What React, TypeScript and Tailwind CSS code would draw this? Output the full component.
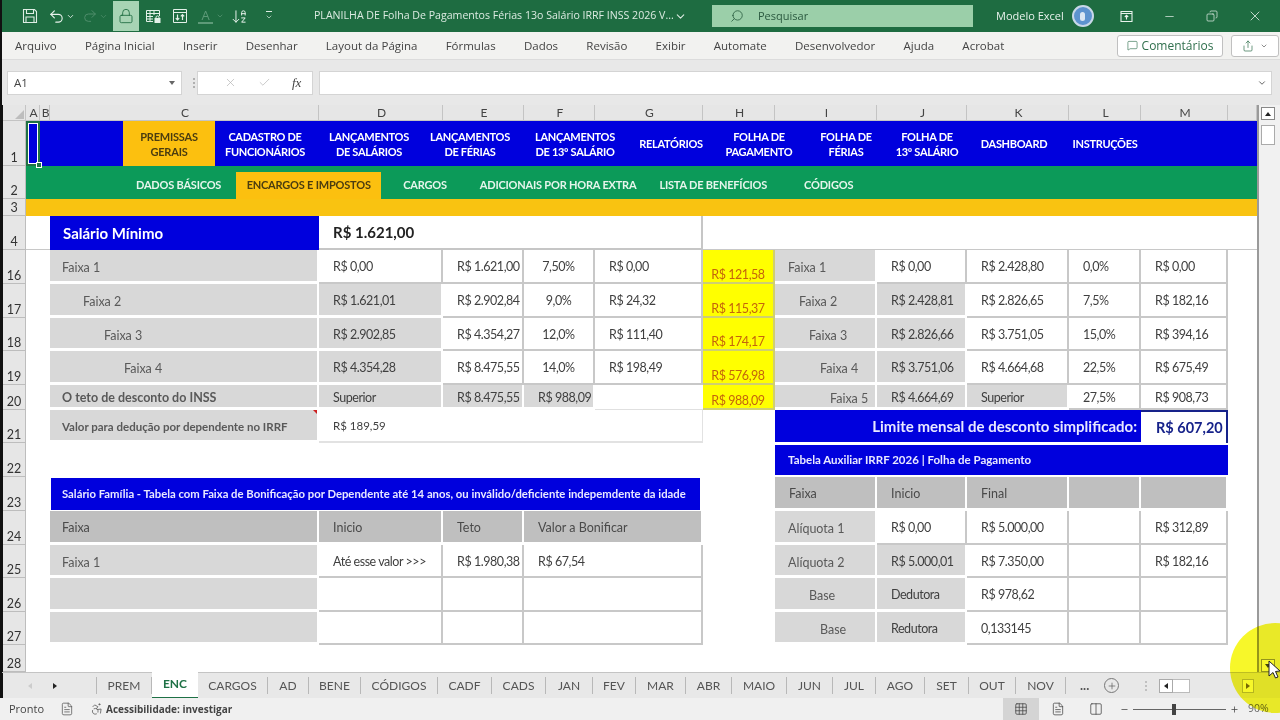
import React from "react";
import { Undo2, Redo2, Lock, ChevronDown, Search, X, Minus, Plus, MessageSquare, Share, Check, ArrowDownAZ, Copy, Grid3x3, FileText, Columns2, Accessibility } from "lucide-react";

type P = { c?: string; children?: React.ReactNode };
const D = ({ c = "", children }: P) => <div className={`flex items-center whitespace-nowrap overflow-hidden ${c}`}>{children}</div>;

const gray = "bg-[#d8d8d8] border-b-[3px] border-r-[2px] border-white text-[#595959] text-[12.5px] pt-[6px]";
const grayV = "bg-[#d8d8d8] border-b-[3px] border-r-[2px] border-white text-[#3f3f3f] text-[12.5px] tracking-[-0.45px] pl-[14px] pt-[4px]";
const white = "bg-white border-b-[2px] border-r-[2px] border-[#c8c8c8] text-[#3f3f3f] text-[12.5px] tracking-[-0.45px] pl-[14px] pt-[3px]";
const head = "bg-[#bfbfbf] border-b-[3px] border-r-[2px] border-white text-[#4a4a4a] text-[12.5px] pl-[14px] pt-[4px]";
const yellow = "bg-[#ffff00] border-b-[2px] border-r-[2px] border-[#cfcf70] text-[#c4640c] text-[12.5px] tracking-[-0.45px] leading-[14px] !items-end justify-center";

const ColH = ({ c = "", children }: P) => (
  <div className={`bg-[#e6e6e6] border-r border-[#c4c4c4] border-b flex items-center justify-center pl-[2px] text-[12px] text-[#444] ${c}`}>{children}</div>
);
const RowH = ({ c = "", children }: P) => (
  <div className={`bg-[#e6e6e6] border-r border-b border-[#bdbdbd] flex items-end justify-center text-[12.5px] text-[#333] leading-[15px] ${c}`}>{children}</div>
);

const Nav = ({ w, children }: { w: string; children: React.ReactNode }) => (
  <div className={`${w} flex items-center justify-center text-center text-white font-bold text-[11px] tracking-[-0.3px] leading-[15px] whitespace-nowrap`}>{children}</div>
);

const tabs: [string, string][] = [
  ["PREM", "w-[55px]"], ["ENC", "w-[46px]"], ["CARGOS", "w-[70px]"], ["AD", "w-[41px]"], ["BENE", "w-[52px]"], ["CÓDIGOS", "w-[77px]"],
  ["CADF", "w-[54px]"], ["CADS", "w-[54px]"], ["JAN", "w-[47px]"], ["FEV", "w-[43px]"], ["MAR", "w-[50px]"], ["ABR", "w-[46px]"],
  ["MAIO", "w-[55px]"], ["JUN", "w-[46px]"], ["JUL", "w-[43px]"], ["AGO", "w-[49px]"], ["SET", "w-[44px]"], ["OUT", "w-[47px]"], ["NOV", "w-[50px]"],
];

const menu = ["Arquivo", "Página Inicial", "Inserir", "Desenhar", "Layout da Página", "Fórmulas", "Dados", "Revisão", "Exibir", "Automate", "Desenvolvedor", "Ajuda", "Acrobat"];

export default function App() {
  return (
    <div className="relative w-[1280px] h-[720px] overflow-hidden bg-white font-['Lato',sans-serif] flex flex-col blur-[0.35px]">
      {/* Title bar */}
      <div className="h-[32px] shrink-0 bg-[#1e6c41] flex items-center text-white font-['Open_Sans',sans-serif]">
        <svg className="ml-[22px] text-[#dfeee5]" width="16" height="16" viewBox="0 0 16 16" fill="none" stroke="currentColor" strokeWidth="1.1">
          <path d="M1.5 1.5H12.5L14.5 3.5V14.5H1.5Z M4.5 1.5V5.5H11.5V1.5 M4 14.5V9H12V14.5" />
        </svg>
        <Undo2 className="ml-[10px] w-[17px] h-[17px] text-[#e8f2ec]" strokeWidth={1.6} />
        <ChevronDown className="ml-[1px] w-[9px] h-[9px]" />
        <Redo2 className="ml-[7px] w-[16px] h-[16px] text-[#4f8d6b]" strokeWidth={1.5} />
        <ChevronDown className="ml-[1px] w-[9px] h-[9px] text-[#4f8d6b]" />
        <div className="ml-[5px] w-[26px] h-[30px] mt-[-1px] bg-[#a7d4b4] flex items-center justify-center">
          <Lock className="w-[16px] h-[16px] text-[#1e6c41]" strokeWidth={1.3} />
        </div>
        <svg className="ml-[6px] text-[#e3f0e8]" width="16" height="16" viewBox="0 0 16 16" fill="none" stroke="currentColor" strokeWidth="1">
          <path d="M1.5 2.5H14.5V8 M1.5 2.5V13.5H8 M1.5 5.5H14.5 M1.5 8.5H8 M1.5 11H8 M5 2.5V13.5 M9 2.5V7" />
          <rect x="10" y="10.5" width="5" height="4" fill="currentColor" />
          <path d="M11 10.5V9C11 7.5 14 7.5 14 9V10.5" />
        </svg>
        <svg className="ml-[11px] text-[#e3f0e8]" width="16" height="16" viewBox="0 0 16 16" fill="none" stroke="currentColor" strokeWidth="1">
          <path d="M1.5 1.5H14.5V14.5H1.5Z M1.5 4.5H14.5" />
          <path d="M5.5 6.5V12 M3.8 10.2L5.5 12L7.2 10.2 M10.5 12V6.5 M8.8 8.3L10.5 6.5L12.2 8.3" strokeWidth="1.2" />
        </svg>
        <span className="ml-[10px] w-[15px] text-center text-[13px] leading-[14px] text-[#5d9a78] border-b-2 border-[#5d9a78]">A</span>
        <ChevronDown className="ml-[3px] w-[8px] h-[8px] text-[#5d9a78]" />
        <ArrowDownAZ className="ml-[7px] w-[17px] h-[17px] text-[#e8f2ec]" strokeWidth={1.4} />
        <div className="ml-[17px] flex flex-col items-center gap-[1px]">
          <div className="w-[6px] h-[1px] bg-[#dfeee5]" />
          <ChevronDown className="w-[8px] h-[8px] text-[#dfeee5]" />
        </div>
        <span className="ml-[41px] w-[360px] text-[10.6px] text-[#dcebe2] whitespace-nowrap">PLANILHA DE Folha De Pagamentos Férias 13o Salário IRRF INSS 2026 V...</span>
        <ChevronDown className="w-[13px] h-[13px] text-[#dcebe2]" />
        <div className="ml-[25px] w-[261px] h-[22px] bg-[#9bcfa9] flex items-center text-[#2c5a40] text-[11px]">
          <Search className="ml-[18px] w-[14px] h-[14px] -scale-x-100 text-[#285c3f]" strokeWidth={1.4} />
          <span className="ml-[14px]">Pesquisar</span>
        </div>
        <span className="ml-[23px] text-[11px] text-[#e8f2ec]">Modelo Excel</span>
        <div className="ml-[8px] w-[22px] h-[22px] rounded-full bg-[#5d93cf] border-2 border-[#c8d8e8] flex items-center justify-center">
          <div className="w-[5px] h-[9px] rounded-sm bg-[#dbe7f3]" />
        </div>
        <svg className="ml-[26px] text-[#e8f2ec]" width="13" height="13" viewBox="0 0 13 13" fill="none" stroke="currentColor" strokeWidth="1.1">
          <path d="M1 1.5H12V11.5H1Z M1 3.5H12 M6.5 9.5V5.5 M4.8 7L6.5 5.3L8.2 7" />
        </svg>
        <Minus className="ml-[30px] w-[13px] h-[13px] text-[#e8f2ec]" strokeWidth={1.3} />
        <Copy className="ml-[30px] w-[12px] h-[12px] -scale-x-100 text-[#e8f2ec]" strokeWidth={1.4} />
        <X className="ml-[29px] w-[16px] h-[16px] text-[#e8f2ec]" strokeWidth={1.2} />
      </div>

      {/* Menu */}
      <div className="h-[28px] shrink-0 bg-[#f2f2f0] flex items-center font-['Open_Sans',sans-serif] text-[11.5px] text-[#444] border-b border-[#dcdcdc]">
        <div className="flex-1 flex gap-[28.25px] pl-[15px]">
          {menu.map((m) => <span key={m}>{m}</span>)}
        </div>
        <div className="w-[106px] h-[22px] mr-[8px] bg-white border border-[#c0c0c0] rounded-[3px] flex items-center justify-center gap-[4px] text-[#2f6f4c] text-[12px]">
          <MessageSquare className="w-[11px] h-[11px]" strokeWidth={1.4} />
          Comentários
        </div>
        <div className="w-[48px] h-[22px] mr-[1px] bg-white border border-[#c0c0c0] rounded-[3px] flex items-center justify-center gap-[6px] text-[#2f6f4c]">
          <Share className="w-[12px] h-[12px]" strokeWidth={1.4} />
          <ChevronDown className="w-[8px] h-[8px] text-[#555]" />
        </div>
      </div>

      {/* Formula bar */}
      <div className="h-[45px] shrink-0 bg-[#e8e8e8] flex items-center text-[#444] font-['Open_Sans',sans-serif]">
        <div className="ml-[7px] w-[175px] h-[24px] bg-white border border-[#d4d4d4] flex items-center justify-between px-[6px] text-[11.5px]">
          A1
          <div className="w-0 h-0 border-l-[3.5px] border-r-[3.5px] border-t-[4px] border-l-transparent border-r-transparent border-t-[#666]" />
        </div>
        <div className="ml-[11px] w-[2px] h-[10px] border-l-2 border-dotted border-[#b0b0b0]" />
        <div className="ml-[2px] w-[116px] h-[24px] bg-white border border-[#d4d4d4] flex items-center gap-[21px] pl-[26px] text-[#b4b4b4]">
          <X className="w-[13px] h-[13px]" strokeWidth={1.3} />
          <Check className="w-[13px] h-[13px]" strokeWidth={1.3} />
          <span className="font-['Liberation_Serif',serif] italic text-[13px] text-[#444]">fx</span>
        </div>
        <div className="ml-[6px] w-[953px] h-[24px] bg-white border border-[#d4d4d4] flex items-center justify-end pr-[4px]">
          <ChevronDown className="w-[10px] h-[10px] text-[#666]" strokeWidth={2.4} />
        </div>
      </div>

      {/* Sheet */}
      <div className="flex-1 min-h-0 flex bg-[#e6e6e6]">
        <div className="w-[3px] bg-[#111]" />
        <div className="w-[1254px] h-[567px] grid grid-cols-[23px_14px_10px_269px_124px_81px_71px_108px_72px_102px_90px_102px_72px_87px_29px] grid-rows-[16px_45px_33px_17px_34px_34px_34px_33px_34px_25px_33px_34px_34px_34px_33px_34px_33px_27px] bg-white">
          {/* column headers */}
          <div className="bg-[#e6e6e6] border-r border-b border-[#c4c4c4] flex items-end justify-end pr-[1px] pb-[1px]">
            <div className="w-0 h-0 border-l-[9px] border-b-[9px] border-l-transparent border-b-[#bdbdbd]" />
          </div>
          <ColH c="bg-[#d0d0d0]">A</ColH><ColH>B</ColH>
          {["C", "D", "E", "F", "G", "H", "I", "J", "K", "L", "M"].map((x) => <ColH key={x}>{x}</ColH>)}
          <ColH />

          {/* 1 */}
          <RowH c="bg-[#cfcfcf]">1</RowH>
          <div className="relative bg-[#0000dd] border-2 border-[#1f7145] outline outline-1 outline-white -outline-offset-3">
            <div className="absolute right-[-4px] bottom-[-4px] w-[6px] h-[6px] bg-[#1f7145] border border-white" />
          </div>
          <div className="col-span-13 bg-[#0000dd] flex pl-[83px]">
            <div className="w-[92px] bg-[#fcc00f] flex items-center justify-center text-center text-[#4a3c10] font-bold text-[11px] tracking-[-0.2px] leading-[15px]">PREMISSAS<br />GERAIS</div>
            <Nav w="w-[100px]">CADASTRO DE<br />FUNCIONÁRIOS</Nav>
            <Nav w="w-[108px]">LANÇAMENTOS<br />DE SALÁRIOS</Nav>
            <Nav w="w-[94px]">LANÇAMENTOS<br />DE  FÉRIAS</Nav>
            <Nav w="w-[116px]">LANÇAMENTOS<br />DE 13º  SALÁRIO</Nav>
            <Nav w="w-[76px]">RELATÓRIOS</Nav>
            <Nav w="w-[100px]">FOLHA DE<br />PAGAMENTO</Nav>
            <Nav w="w-[74px]">FOLHA DE<br />FÉRIAS</Nav>
            <Nav w="w-[88px]">FOLHA DE<br />13º SALÁRIO</Nav>
            <Nav w="w-[86px]">DASHBOARD</Nav>
            <Nav w="w-[96px]">INSTRUÇÕES</Nav>
          </div>

          {/* 2 */}
          <RowH>2</RowH>
          <div className="col-span-14 bg-[#0c9a59] flex items-end text-[11px] tracking-[-0.2px] font-bold text-[#e6f5ec] whitespace-nowrap">
            <div className="h-[27px] flex items-center ml-[110px]">DADOS BÁSICOS</div>
            <div className="h-[27px] w-[145px] ml-[15px] bg-[#fcc00f] flex items-center justify-center text-[#4a3c10]">ENCARGOS E IMPOSTOS</div>
            <div className="h-[27px] flex items-center ml-[22px]">CARGOS</div>
            <div className="h-[27px] flex items-center ml-[33px]">ADICIONAIS POR HORA EXTRA</div>
            <div className="h-[27px] flex items-center ml-[23px]">LISTA DE BENEFÍCIOS</div>
            <div className="h-[27px] flex items-center ml-[37px]">CÓDIGOS</div>
          </div>

          {/* 3 */}
          <RowH>3</RowH>
          <div className="col-span-14 bg-[#f9c311]" />

          {/* 4 */}
          <RowH>4</RowH>
          <div className="col-span-2 bg-white border-b border-[#c8c8c8]" />
          <D c="bg-[#0000dd] text-white font-bold text-[15px] pl-[13px]">Salário Mínimo</D>
          <D c="col-span-4 bg-white border-b-2 border-r-2 border-[#c6c6c6] text-[#222] font-bold text-[15px] pl-[14px]">R$ 1.621,00</D>
          <div className="col-span-7 bg-white border-b border-[#c8c8c8]" />

          {/* 16 */}
          <RowH>16</RowH><div className="col-span-2" />
          <D c={`${gray} pl-[12px]`}>Faixa 1</D>
          <D c={white}>R$ 0,00</D><D c={white}>R$ 1.621,00</D><D c={`${white} !pl-0 justify-center`}>7,50%</D><D c={white}>R$ 0,00</D>
          <D c={yellow}>R$ 121,58</D>
          <D c={`${gray} pl-[13px]`}>Faixa 1</D>
          <D c={white}>R$ 0,00</D><D c={white}>R$ 2.428,80</D><D c={white}>0,0%</D><D c={white}>R$ 0,00</D><div />

          {/* 17 */}
          <RowH>17</RowH><div className="col-span-2" />
          <D c={`${gray} pl-[33px]`}>Faixa 2</D>
          <D c={grayV}>R$ 1.621,01</D><D c={white}>R$ 2.902,84</D><D c={`${white} !pl-0 justify-center`}>9,0%</D><D c={white}>R$ 24,32</D>
          <D c={yellow}>R$ 115,37</D>
          <D c={`${gray} pl-[24px]`}>Faixa 2</D>
          <D c={grayV}>R$ 2.428,81</D><D c={white}>R$ 2.826,65</D><D c={white}>7,5%</D><D c={white}>R$ 182,16</D><div />

          {/* 18 */}
          <RowH>18</RowH><div className="col-span-2" />
          <D c={`${gray} pl-[54px]`}>Faixa 3</D>
          <D c={grayV}>R$ 2.902,85</D><D c={white}>R$ 4.354,27</D><D c={`${white} !pl-0 justify-center`}>12,0%</D><D c={white}>R$ 111,40</D>
          <D c={yellow}>R$ 174,17</D>
          <D c={`${gray} pl-[34px]`}>Faixa 3</D>
          <D c={grayV}>R$ 2.826,66</D><D c={white}>R$ 3.751,05</D><D c={white}>15,0%</D><D c={white}>R$ 394,16</D><div />

          {/* 19 */}
          <RowH>19</RowH><div className="col-span-2" />
          <D c={`${gray} pl-[74px]`}>Faixa 4</D>
          <D c={grayV}>R$ 4.354,28</D><D c={white}>R$ 8.475,55</D><D c={`${white} !pl-0 justify-center`}>14,0%</D><D c={white}>R$ 198,49</D>
          <D c={yellow}>R$ 576,98</D>
          <D c={`${gray} pl-[45px]`}>Faixa 4</D>
          <D c={grayV}>R$ 3.751,06</D><D c={white}>R$ 4.664,68</D><D c={white}>22,5%</D><D c={white}>R$ 675,49</D><div />

          {/* 20 */}
          <RowH>20</RowH><div className="col-span-2" />
          <D c={`${gray} !pt-[4px] pl-[12px] font-bold`}>O teto de desconto do INSS</D>
          <D c={grayV}>Superior</D><D c={grayV}>R$ 8.475,55</D><D c={grayV}>R$ 988,09</D><D c="bg-white border-b border-[#e0e0e0]" />
          <D c={yellow}>R$ 988,09</D>
          <D c={`${gray} pl-[55px]`}>Faixa 5</D>
          <D c={grayV}>R$ 4.664,69</D><D c={grayV}>Superior</D><D c={white}>27,5%</D><D c={white}>R$ 908,73</D><div />

          {/* 21 */}
          <RowH>21</RowH><div className="col-span-2" />
          <div className={`relative flex items-center ${gray} !pt-[3px] !text-[11.5px] pl-[12px] font-bold`}>
            Valor para dedução por dependente no IRRF
            <div className="absolute top-0 right-0 w-0 h-0 border-l-[4px] border-b-[4px] border-l-transparent border-b-transparent border-t-0 border-r-[4px] border-r-[#cc2020]" />
          </div>
          <D c="col-span-4 bg-white border-b-2 border-r border-[#e2e2e2] text-[#3f3f3f] text-[11.5px] pl-[14px]">R$ 189,59</D>
          <div />
          <D c="col-span-4 bg-[#0000dd] text-[#e8e8ff] font-bold text-[15px] justify-end pr-[4px] mb-[1px]">Limite mensal de desconto simplificado:</D>
          <D c="bg-white border-t-2 border-r-2 border-[#16228a] text-[#16228a] font-bold text-[14.5px] pl-[15px]">R$ 607,20</D>
          <div />

          {/* 22 */}
          <RowH>22</RowH><div className="col-span-7" />
          <div />
          <D c="col-span-5 bg-[#0000dd] text-[#e8e8ff] font-bold text-[11.5px] pl-[13px] my-[2px]">Tabela Auxiliar IRRF 2026 | Folha de Pagamento</D>
          <div />

          {/* 23 */}
          <RowH>23</RowH><div className="col-span-2" />
          <D c="col-span-5 ml-[1px] mr-[3px] my-[1px] bg-[#0000dd] text-[#e8e8ff] font-bold text-[11.3px] pl-[11px]">Salário Família - Tabela com Faixa de Bonificação por Dependente até 14 anos, ou inválido/deficiente indepemdente da idade</D>
          <div />
          <D c={head}>Faixa</D><D c={head}>Inicio</D><D c={head}>Final</D><D c={head} /><D c={head} /><div />

          {/* 24 */}
          <RowH>24</RowH><div className="col-span-2" />
          <D c={`${head} !pl-[12px]`}>Faixa</D><D c={head}>Inicio</D><D c={head}>Teto</D><D c={`${head} col-span-2`}>Valor a Bonificar</D>
          <div />
          <D c={`${gray} pl-[13px]`}>Alíquota 1</D><D c={white}>R$ 0,00</D><D c={white}>R$ 5.000,00</D><D c={white} /><D c={white}>R$ 312,89</D><div />

          {/* 25 */}
          <RowH>25</RowH><div className="col-span-2" />
          <D c={`${gray} pl-[12px]`}>Faixa 1</D><D c={white}>Até esse valor &gt;&gt;&gt;</D><D c={white}>R$ 1.980,38</D><D c={`${white} col-span-2`}>R$ 67,54</D>
          <div />
          <D c={`${gray} pl-[13px]`}>Alíquota 2</D><D c={grayV}>R$ 5.000,01</D><D c={white}>R$ 7.350,00</D><D c={white} /><D c={white}>R$ 182,16</D><div />

          {/* 26 */}
          <RowH>26</RowH><div className="col-span-2" />
          <D c={gray} /><D c={white} /><D c={white} /><D c={`${white} col-span-2`} />
          <div />
          <D c={`${gray} pl-[34px]`}>Base</D><D c={grayV}>Dedutora</D><D c={white}>R$ 978,62</D><D c={white} /><D c={white} /><div />

          {/* 27 */}
          <RowH>27</RowH><div className="col-span-2" />
          <D c={gray} /><D c={white} /><D c={white} /><D c={`${white} col-span-2`} />
          <div />
          <D c={`${gray} pl-[45px]`}>Base</D><D c={grayV}>Redutora</D><D c={white}>0,133145</D><D c={white} /><D c={white} /><div />

          {/* 28 */}
          <RowH>28</RowH><div className="col-span-14" />
        </div>

        {/* vertical scrollbar */}
        <div className="flex-1 bg-[#f1f1f1] border-l-2 border-[#9a9a9a] flex flex-col items-start pl-[2px] justify-between pt-[2px]">
          <div className="flex flex-col items-center gap-[5px]">
            <div className="w-[14px] h-[13px] bg-white border border-[#888] flex items-center justify-center">
              <div className="w-0 h-0 border-l-[3px] border-r-[3px] border-b-[4px] border-l-transparent border-r-transparent border-b-[#222]" />
            </div>
            <div className="w-[14px] h-[20px] bg-white border border-[#aaa]" />
          </div>
          <div className="w-[14px] h-[13px] bg-white border border-[#999] flex items-center justify-center">
            <div className="w-0 h-0 border-l-[3px] border-r-[3px] border-t-[4px] border-l-transparent border-r-transparent border-t-[#444]" />
          </div>
        </div>
      </div>

      {/* Sheet tabs */}
      <div className="h-[26px] shrink-0 bg-[#e8e8e8] border-t border-[#c4c4c4] flex items-center text-[12px] text-[#555]">
        <div className="w-[3px] h-full bg-[#111]" />
        <div className="w-[94px] h-[17px] flex items-center border-r border-[#b8b8b8]">
          <div className="ml-[25px] w-0 h-0 border-t-[3px] border-b-[3px] border-r-[4px] border-t-transparent border-b-transparent border-r-[#ccc]" />
          <div className="ml-[21px] w-0 h-0 border-t-[3.5px] border-b-[3.5px] border-l-[4px] border-t-transparent border-b-transparent border-l-[#222]" />
        </div>
        {tabs.map(([t, w]) =>
          t === "ENC" ? (
            <div key={t} className={`${w} h-[27px] mt-[-1px] bg-white border-b-2 border-[#1e7145] text-[#1e7145] font-bold flex items-center justify-center`}>{t}</div>
          ) : (
            <div key={t} className={`${w} h-[17px] border-r border-[#b8b8b8] flex items-center justify-center`}>{t}</div>
          )
        )}
        <span className="ml-[14px] text-[13px] font-bold">...</span>
        <div className="ml-[15px] w-[15px] h-[15px] rounded-full border border-[#777] flex items-center justify-center">
          <Plus className="w-[10px] h-[10px]" strokeWidth={1.6} />
        </div>
        <div className="ml-[26px] w-[2px] h-[10px] border-l-2 border-dotted border-[#c0c0c0]" />
        <div className="ml-[12px] w-[14px] h-[14px] bg-white border border-[#aaa] flex items-center justify-center">
          <div className="w-0 h-0 border-t-[3px] border-b-[3px] border-r-[4px] border-t-transparent border-b-transparent border-r-[#222]" />
        </div>
        <div className="w-[17px] h-[14px] bg-white border-y border-r border-[#bbb]" />
        <div className="ml-[52px] w-[12px] h-[14px] bg-white border border-[#bbb] flex items-center justify-center">
          <div className="w-0 h-0 border-t-[3px] border-b-[3px] border-l-[4px] border-t-transparent border-b-transparent border-l-[#7a6a10]" />
        </div>
      </div>

      {/* Status bar */}
      <div className="h-[22px] shrink-0 bg-[#f0f0f0] flex items-center text-[11px] text-[#444] font-['Open_Sans',sans-serif]">
        <span className="ml-[9px] w-[36px]">Pronto</span>
        <FileText className="ml-[15px] w-[14px] h-[14px] text-[#555]" strokeWidth={1.3} />
        <Accessibility className="ml-[16px] w-[14px] h-[14px] text-[#555]" strokeWidth={1.3} />
        <span className="ml-[2px] w-[124px] font-bold text-[10px] whitespace-nowrap">Acessibilidade: investigar</span>
        <div className="ml-[773px] w-[36px] h-[22px] bg-[#d4d4d4] flex items-center justify-center">
          <Grid3x3 className="w-[14px] h-[14px]" strokeWidth={1.3} />
        </div>
        <FileText className="ml-[12px] w-[14px] h-[14px]" strokeWidth={1.3} />
        <Columns2 className="ml-[24px] w-[14px] h-[14px]" strokeWidth={1.3} />
        <Minus className="ml-[17px] w-[9px] h-[9px]" />
        <div className="ml-[4px] w-[93px] h-[1px] bg-[#666] flex items-center pl-[39px]">
          <div className="w-[4px] h-[11px] bg-[#444]" />
        </div>
        <Plus className="ml-[4px] w-[9px] h-[9px]" />
        <span className="ml-[9px] text-[10.5px] text-[#666]">90%</span>
      </div>

      {/* window edge, cursor highlight */}
      <div className="absolute left-0 top-0 w-[2px] h-[698px] bg-[#111]" />
      <div className="absolute left-[1230px] top-[623px] w-[90px] h-[90px] rounded-full bg-[#f7f72a] mix-blend-multiply" />
      <svg className="absolute left-[1268px] top-[660px]" width="12" height="20" viewBox="0 0 12 20">
        <path d="M1 1 L1 16 L5 12.5 L7.5 18 L10 17 L7.5 11.5 L12 11 Z" fill="#fff" stroke="#222" strokeWidth="1" />
      </svg>
    </div>
  );
}
